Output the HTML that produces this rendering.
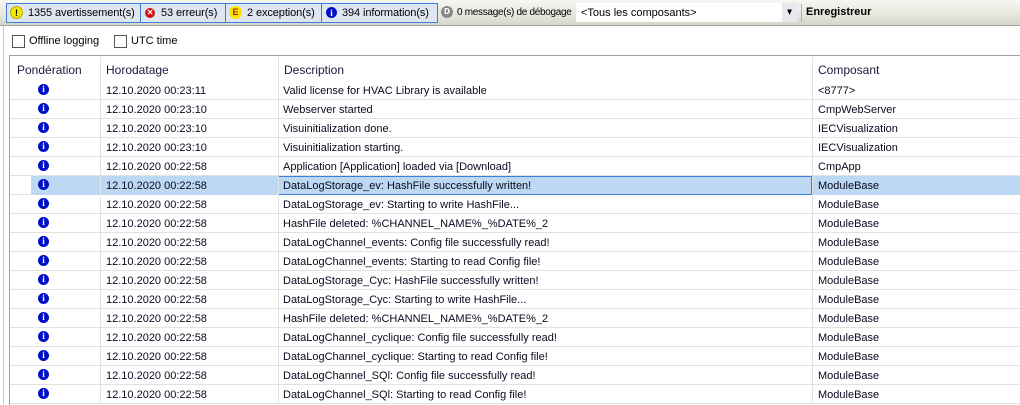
<!DOCTYPE html>
<html><head><meta charset="utf-8"><style>
body{margin:0;width:1020px;height:404px;overflow:hidden;background:#fff;font-family:Tahoma,"DejaVu Sans Condensed","Liberation Sans",sans-serif;font-size:11px;color:#000;position:relative}
.tb{position:absolute;left:0;top:0;width:1020px;height:25px;background:linear-gradient(#f7f7f2,#e6e6dc 60%,#d6d6cb);border-bottom:1px solid #a8a8a0}
.btn{position:absolute;top:3px;height:18px;border:1px solid #3c7fd8;background:#dfe6f3;line-height:18px;font-size:11px;font-family:"Liberation Sans",sans-serif;letter-spacing:-0.1px}
.ic{position:absolute;top:3px;width:12px;height:12px;border-radius:50%;font-weight:bold;font-size:9px;line-height:12px;text-align:center}
.t{position:absolute;white-space:nowrap;font-family:"Liberation Sans",sans-serif;font-size:11px}
.row{position:absolute;left:10px;width:1010px;height:18px;border-bottom:1px solid #e2e2e2}
.row span{position:absolute;top:4px;white-space:nowrap;font-family:"Liberation Sans",sans-serif;font-size:11px;color:#0a0a20}
.info{position:absolute;left:28px;top:3px;width:11px;height:11px;border-radius:50%;background:#0010c8;color:#fff;font:bold 9px/11px "Liberation Serif",serif;text-align:center}
.vl{position:absolute;top:57px;width:1px;height:347px;background:#e2e2e2}
.cb{position:absolute;top:35px;width:11px;height:11px;border:1px solid #555;background:#fff}
</style></head><body>
<div class="tb">
 <div class="btn" style="left:6px;width:133px"><div class="ic" style="left:3px;background:#f5e800;border:1px solid #b8a800;width:11px;height:11px;top:2px">!</div><span style="position:absolute;left:21px">1355 avertissement(s)</span></div>
 <div class="btn" style="left:140px;width:84px"><div class="ic" style="left:4px;background:#d01010;color:#fff;width:10px;height:10px;top:4px;font-size:8px;line-height:10px">✕</div><span style="position:absolute;left:20px">53 erreur(s)</span></div>
 <div class="btn" style="left:225px;width:95px"><div class="ic" style="left:3px;background:#f5e800;color:#d01010;width:13px;height:13px;top:2px;line-height:13px">E</div><span style="position:absolute;left:21px">2 exception(s)</span></div>
 <div class="btn" style="left:321px;width:115px"><div class="ic" style="left:4px;background:#0010c8;color:#fff;width:11px;height:11px;font-family:'Liberation Serif',serif">i</div><span style="position:absolute;left:20px">394 information(s)</span></div>
 <div class="ic" style="left:441px;top:6px;background:#888;color:#fff;width:12px;height:12px;font-size:8px">D</div>
 <span class="t" style="left:457px;top:7px;font-size:10px;letter-spacing:-0.3px">0 message(s) de débogage</span>
 <div style="position:absolute;left:576px;top:3px;width:206px;height:19px;background:#fff"></div>
 <span class="t" style="left:581px;top:7px">&lt;Tous les composants&gt;</span>
 <div style="position:absolute;left:782px;top:3px;width:15px;height:19px;background:#e8e8ee;font-size:7px;text-align:center;line-height:19px">▼</div>
 <div style="position:absolute;left:801px;top:4px;width:1px;height:18px;background:#b0b0a8"></div>
 <span class="t" style="left:806px;top:6px;font-weight:bold">Enregistreur</span>
</div>
<div style="position:absolute;left:3px;top:26px;width:1px;height:378px;background:#c8c8c8"></div>
<div class="cb" style="left:12px"></div><span class="t" style="left:29px;top:35px">Offline logging</span>
<div class="cb" style="left:114px"></div><span class="t" style="left:131px;top:35px">UTC time</span>
<div style="position:absolute;left:9px;top:55px;width:1011px;height:349px;border-top:1px solid #a0a0a0;border-left:1px solid #a0a0a0"></div>
<span class="t" style="left:17px;top:63px;color:#1a1a3a;font-size:12px">Pondération</span>
<span class="t" style="left:106px;top:63px;color:#1a1a3a;font-size:12px">Horodatage</span>
<span class="t" style="left:284px;top:63px;color:#1a1a3a;font-size:12px">Description</span>
<span class="t" style="left:818px;top:63px;color:#1a1a3a;font-size:12px">Composant</span>
<div id="rows"></div>
<div class="vl" style="left:100px"></div><div class="vl" style="left:278px"></div><div class="vl" style="left:812px"></div>
<script>
var d=[["12.10.2020 00:23:11","Valid license for HVAC Library is available","<8777>"],
["12.10.2020 00:23:10","Webserver started","CmpWebServer"],
["12.10.2020 00:23:10","Visuinitialization done.","IECVisualization"],
["12.10.2020 00:23:10","Visuinitialization starting.","IECVisualization"],
["12.10.2020 00:22:58","Application [Application] loaded via [Download]","CmpApp"],
["12.10.2020 00:22:58","DataLogStorage_ev: HashFile successfully written!","ModuleBase"],
["12.10.2020 00:22:58","DataLogStorage_ev: Starting to write HashFile...","ModuleBase"],
["12.10.2020 00:22:58","HashFile deleted: %CHANNEL_NAME%_%DATE%_2","ModuleBase"],
["12.10.2020 00:22:58","DataLogChannel_events: Config file successfully read!","ModuleBase"],
["12.10.2020 00:22:58","DataLogChannel_events: Starting to read Config file!","ModuleBase"],
["12.10.2020 00:22:58","DataLogStorage_Cyc: HashFile successfully written!","ModuleBase"],
["12.10.2020 00:22:58","DataLogStorage_Cyc: Starting to write HashFile...","ModuleBase"],
["12.10.2020 00:22:58","HashFile deleted: %CHANNEL_NAME%_%DATE%_2","ModuleBase"],
["12.10.2020 00:22:58","DataLogChannel_cyclique: Config file successfully read!","ModuleBase"],
["12.10.2020 00:22:58","DataLogChannel_cyclique: Starting to read Config file!","ModuleBase"],
["12.10.2020 00:22:58","DataLogChannel_SQl: Config file successfully read!","ModuleBase"],
["12.10.2020 00:22:58","DataLogChannel_SQl: Starting to read Config file!","ModuleBase"]];
var h="";function e(s){return s.replace(/</g,"&lt;").replace(/>/g,"&gt;")}
d.forEach(function(r,i){var top=81+i*19;var sel=i==5;
h+='<div class="row" style="top:'+top+'px">'+(sel?'<div style="position:absolute;left:21px;top:0;width:989px;height:19px;background:#bcd8f2"></div><div style="position:absolute;left:268px;top:0;width:532px;height:17px;border:1px solid #3c7fd8"></div>':'')+'<div class="info">i</div><span style="left:96px">'+r[0]+'</span><span style="left:273px">'+e(r[1])+'</span><span style="left:808px">'+e(r[2])+'</span></div>';});
document.getElementById("rows").innerHTML=h;
</script>
</body></html>
